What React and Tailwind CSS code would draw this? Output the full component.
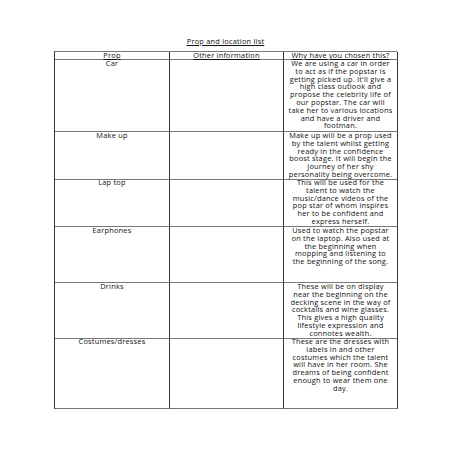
import React from 'react';

const rows = [
  {
    prop: 'Car',
    h: 'h-[72px]',
    why: [
      'We are using a car in order',
      'to act as if the popstar is',
      "getting picked up. It'll give a",
      'high class outlook and',
      'propose the celebrity life of',
      'our popstar. The car will',
      'take her to various locations',
      'and have a driver and',
      'footman.',
    ],
  },
  {
    prop: 'Make up',
    h: 'h-[47px]',
    why: [
      'Make up will be a prop used',
      'by the talent whilst getting',
      'ready in the confidence',
      'boost stage. It will begin the',
      'journey of her shy',
      'personality being overcome.',
    ],
  },
  {
    prop: 'Lap top',
    h: 'h-[48px]',
    why: [
      'This will be used for the',
      'talent to watch the',
      'music/dance videos of the',
      'pop star of whom inspires',
      'her to be confident and',
      'express herself.',
    ],
  },
  {
    prop: 'Earphones',
    h: 'h-[56px]',
    why: [
      'Used to watch the popstar',
      'on the laptop. Also used at',
      'the beginning when',
      'mopping and listening to',
      'the beginning of the song.',
    ],
  },
  {
    prop: 'Drinks',
    h: 'h-[55px]',
    why: [
      'These will be on display',
      'near the beginning on the',
      'decking scene in the way of',
      'cocktails and wine glasses.',
      'This gives a high quality',
      'lifestyle expression and',
      'connotes wealth.',
    ],
  },
  {
    prop: 'Costumes/dresses',
    h: 'h-[71px]',
    why: [
      'These are the dresses with',
      'labels in and other',
      'costumes which the talent',
      'will have in her room. She',
      'dreams of being confident',
      'enough to wear them one',
      'day.',
    ],
  },
];

const cell = 'border-r border-b border-r-[#333] border-b-[#777] text-center whitespace-nowrap';

export default function App() {
  return (
    <div className="w-[453px] h-[453px] bg-white text-[#111] font-['Open_Sans',sans-serif] text-[7.4px] leading-[7.8px] tracking-[0.22px]">
      <div className="pl-[54px] pt-[38px]">
        <div className="w-[343px] text-center underline h-[13px]">Prop and location list</div>
        <div className="w-[343px] border-l border-t border-l-[#333] border-t-[#777]">
          <div className="grid grid-cols-[115px_114px_114px] h-[8px]">
            <div className={cell + ' underline leading-[7px]'}>Prop</div>
            <div className={cell + ' underline leading-[7px]'}>Other information</div>
            <div className={cell + ' underline leading-[7px]'}>Why have you chosen this?</div>
          </div>
          {rows.map((r) => (
            <div key={r.prop} className={'grid grid-cols-[115px_114px_114px] ' + r.h}>
              <div className={cell}>{r.prop}</div>
              <div className={cell}></div>
              <div className={cell}>
                {r.why.map((line) => (
                  <div key={line}>{line}</div>
                ))}
              </div>
            </div>
          ))}
        </div>
      </div>
    </div>
  );
}
